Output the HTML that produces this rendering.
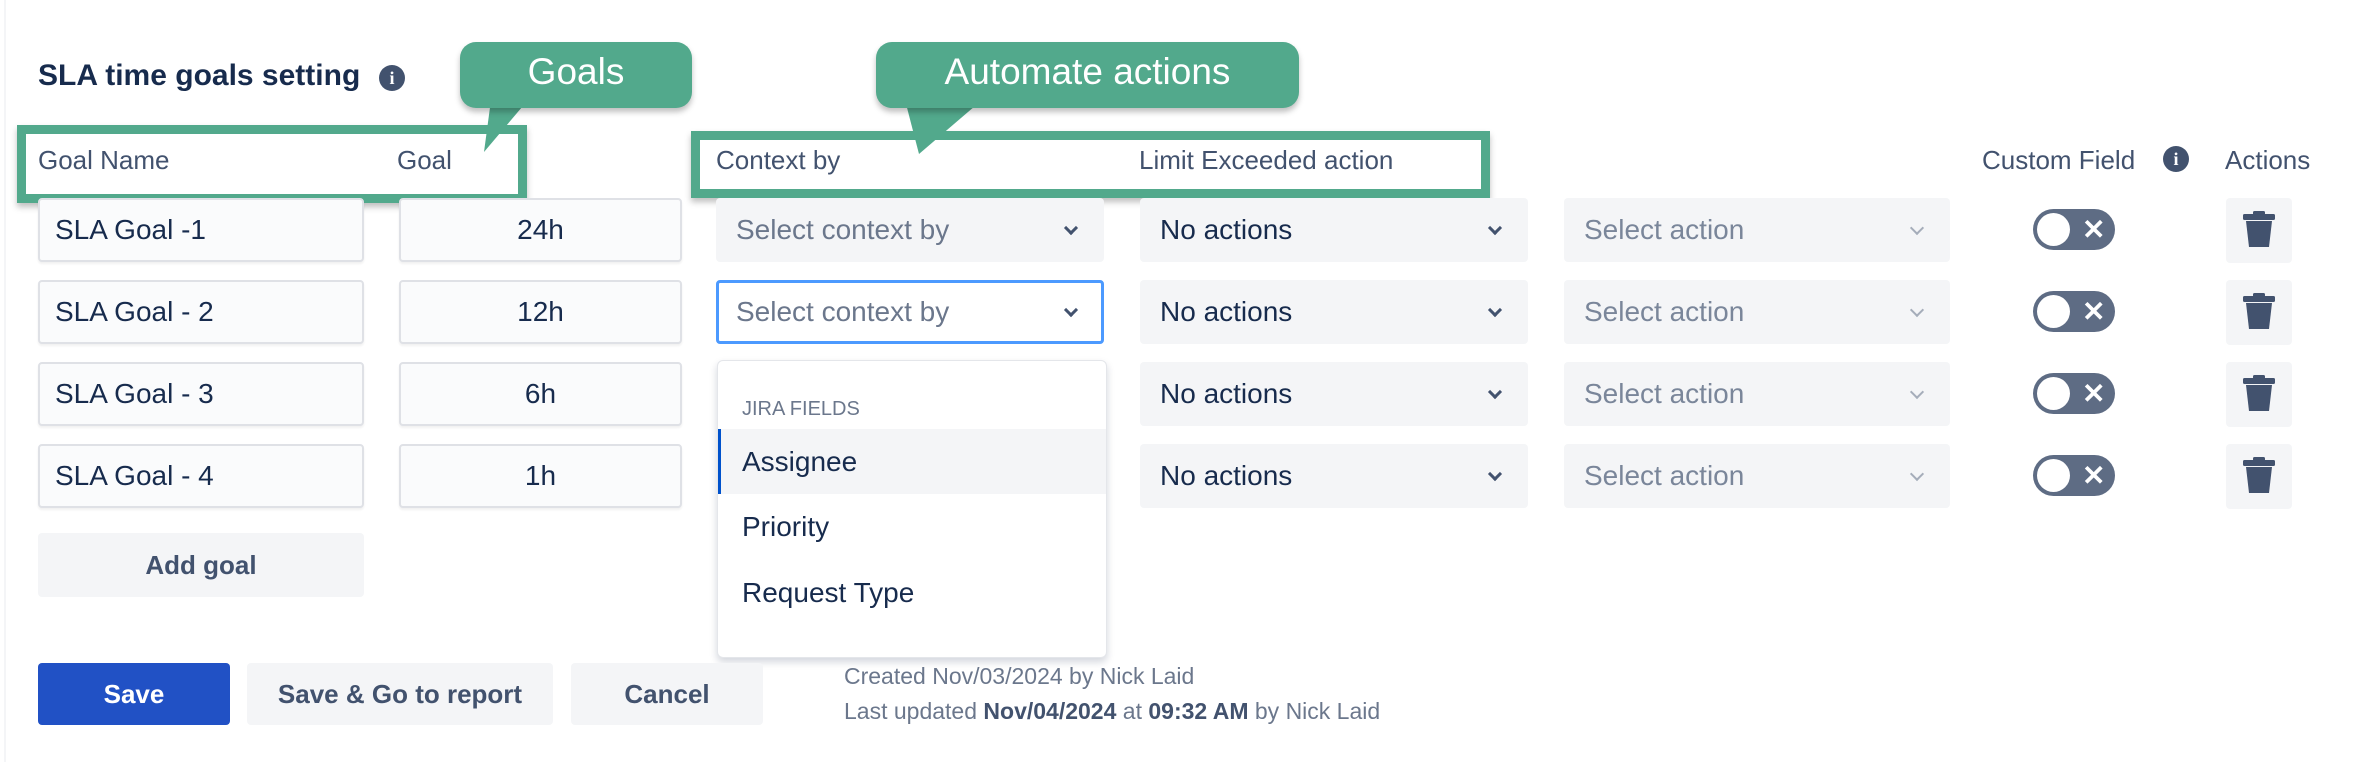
<!DOCTYPE html>
<html><head><meta charset="utf-8"><style>
*{box-sizing:border-box;margin:0;padding:0}
body{width:2354px;height:762px;background:#fff;position:relative;overflow:hidden;font-family:"Liberation Sans",sans-serif;color:#172b4d}
.a{position:absolute}
.t{position:absolute;white-space:nowrap;line-height:1}
.inp{position:absolute;background:#fafbfc;border:2px solid #dfe1e6;border-radius:4px;font-size:28px;display:flex;align-items:center;box-shadow:0 2px 2px rgba(0,0,0,.06)}
.sel{position:absolute;background:#f4f5f7;border-radius:4px;font-size:28px;display:flex;align-items:center;padding-left:20px}
.chev{position:absolute;right:28px;top:50%;width:10px;height:10px;border-right:3px solid #42526e;border-bottom:3px solid #42526e;transform:translateY(-70%) rotate(45deg)}
.chev.l{border-color:#a5adba;border-width:2px}
.btn{position:absolute;background:#f4f5f7;border-radius:4px;font-size:26px;display:flex;align-items:center;justify-content:center;color:#42526e;font-weight:bold}
.gbox{position:absolute;border:9px solid #52a98c;background:#fff;box-shadow:0 4px 6px rgba(0,0,0,.25)}
.call{position:absolute;background:#52a98c;border-radius:16px;color:#fff;font-size:37px;display:flex;align-items:center;justify-content:center;padding-bottom:6px;box-shadow:0 4px 6px rgba(0,0,0,.25)}
.tog{position:absolute;width:82px;height:41px;border-radius:21px;background:#5e6c84}
.tog:before{content:"";position:absolute;left:4px;top:4px;width:33px;height:33px;border-radius:50%;background:#fff}
.tog span{position:absolute;left:49px;top:4px;color:#fff;font-size:28px;font-weight:bold}
.tr{position:absolute;width:66px;height:65px;background:#f4f5f7;border-radius:4px}
.info{position:absolute;width:26px;height:26px;border-radius:50%;background:#42526e;color:#fff;font-size:18px;font-weight:bold;text-align:center;line-height:26px;font-family:"Liberation Serif",serif}
.h{font-size:26px;color:#42526e}
</style></head><body>
<div class="a" style="left:4px;top:0;width:2px;height:762px;background:#f4f5f7"></div>

<div class="t" style="left:38px;top:61px;font-size:30px;font-weight:bold">SLA time goals setting</div>
<div class="info" style="left:379px;top:65px">i</div>

<div class="gbox" style="left:17px;top:125px;width:510px;height:78px"></div>
<div class="gbox" style="left:691px;top:131px;width:799px;height:67px"></div>

<svg class="a" style="left:0;top:0" width="1400" height="170"><polygon points="491,100 528,100 484,152" fill="#52a98c"/><polygon points="905,100 982,100 919,154" fill="#52a98c"/></svg>
<div class="call" style="left:460px;top:42px;width:232px;height:66px">Goals</div>
<div class="call" style="left:876px;top:42px;width:423px;height:66px">Automate actions</div>

<div class="t h" style="left:38px;top:147px">Goal Name</div>
<div class="t h" style="left:397px;top:147px">Goal</div>
<div class="t h" style="left:716px;top:147px">Context by</div>
<div class="t h" style="left:1139px;top:147px">Limit Exceeded action</div>
<div class="t h" style="left:1982px;top:147px">Custom Field</div>
<div class="info" style="left:2163px;top:146px">i</div>
<div class="t h" style="left:2225px;top:147px">Actions</div>

<!-- rows -->
<div class="inp" style="left:38px;top:198px;width:326px;height:64px;padding-left:15px">SLA Goal -1</div>
<div class="inp" style="left:399px;top:198px;width:283px;height:64px;justify-content:center">24h</div>
<div class="sel" style="left:716px;top:198px;width:388px;height:64px;color:#6b778c">Select context by<i class="chev"></i></div>
<div class="sel" style="left:1140px;top:198px;width:388px;height:64px">No actions<i class="chev"></i></div>
<div class="sel" style="left:1564px;top:198px;width:386px;height:64px;color:#7a869a">Select action<i class="chev l"></i></div>
<div class="tog" style="left:2033px;top:209px"><span>✕</span></div>

<div class="inp" style="left:38px;top:280px;width:326px;height:64px;padding-left:15px">SLA Goal - 2</div>
<div class="inp" style="left:399px;top:280px;width:283px;height:64px;justify-content:center">12h</div>
<div class="sel" style="left:716px;top:280px;width:388px;height:64px;color:#6b778c;background:#fff;border:3px solid #4c9aff;padding-left:17px">Select context by<i class="chev" style="right:25px"></i></div>
<div class="sel" style="left:1140px;top:280px;width:388px;height:64px">No actions<i class="chev"></i></div>
<div class="sel" style="left:1564px;top:280px;width:386px;height:64px;color:#7a869a">Select action<i class="chev l"></i></div>
<div class="tog" style="left:2033px;top:291px"><span>✕</span></div>

<div class="inp" style="left:38px;top:362px;width:326px;height:64px;padding-left:15px">SLA Goal - 3</div>
<div class="inp" style="left:399px;top:362px;width:283px;height:64px;justify-content:center">6h</div>
<div class="sel" style="left:1140px;top:362px;width:388px;height:64px">No actions<i class="chev"></i></div>
<div class="sel" style="left:1564px;top:362px;width:386px;height:64px;color:#7a869a">Select action<i class="chev l"></i></div>
<div class="tog" style="left:2033px;top:373px"><span>✕</span></div>

<div class="inp" style="left:38px;top:444px;width:326px;height:64px;padding-left:15px">SLA Goal - 4</div>
<div class="inp" style="left:399px;top:444px;width:283px;height:64px;justify-content:center">1h</div>
<div class="sel" style="left:1140px;top:444px;width:388px;height:64px">No actions<i class="chev"></i></div>
<div class="sel" style="left:1564px;top:444px;width:386px;height:64px;color:#7a869a">Select action<i class="chev l"></i></div>
<div class="tog" style="left:2033px;top:455px"><span>✕</span></div>

<!-- trash -->
<div class="tr" style="left:2226px;top:198px"></div>
<div class="tr" style="left:2226px;top:280px"></div>
<div class="tr" style="left:2226px;top:362px"></div>
<div class="tr" style="left:2226px;top:444px"></div>
<svg class="a" style="left:2226px;top:198px" width="66" height="330">
<g fill="#42526e" id="tc"><rect x="27" y="13" width="12" height="4" rx="1.5"/><rect x="17" y="16" width="32" height="6" rx="1.5"/><path d="M20 23 H46 L43 49 H23 Z"/></g>
<use href="#tc" y="82"/><use href="#tc" y="164"/><use href="#tc" y="246"/>
</svg>

<!-- dropdown -->
<div class="a" style="left:717px;top:360px;width:390px;height:298px;background:#fff;border:1px solid #e4e6ea;border-radius:6px;box-shadow:0 4px 8px rgba(9,30,66,.18)"></div>
<div class="t" style="left:742px;top:399px;font-size:20px;color:#6b778c">JIRA FIELDS</div>
<div class="a" style="left:718px;top:429px;width:388px;height:65px;background:#f4f5f7;border-left:3px solid #0052cc"></div>
<div class="t" style="left:742px;top:448px;font-size:28px">Assignee</div>
<div class="t" style="left:742px;top:513px;font-size:28px">Priority</div>
<div class="t" style="left:742px;top:579px;font-size:28px">Request Type</div>

<div class="btn" style="left:38px;top:533px;width:326px;height:64px">Add goal</div>
<div class="btn" style="left:38px;top:663px;width:192px;height:62px;background:#2151c5;color:#fff">Save</div>
<div class="btn" style="left:247px;top:663px;width:306px;height:62px">Save &amp; Go to report</div>
<div class="btn" style="left:571px;top:663px;width:192px;height:62px">Cancel</div>

<div class="t" style="left:844px;top:665px;font-size:23px;color:#6b778c">Created Nov/03/2024 by Nick Laid</div>
<div class="t" style="left:844px;top:700px;font-size:23px;color:#6b778c">Last updated <b style="color:#42526e">Nov/04/2024</b> at <b style="color:#42526e">09:32 AM</b> by Nick Laid</div>
</body></html>
